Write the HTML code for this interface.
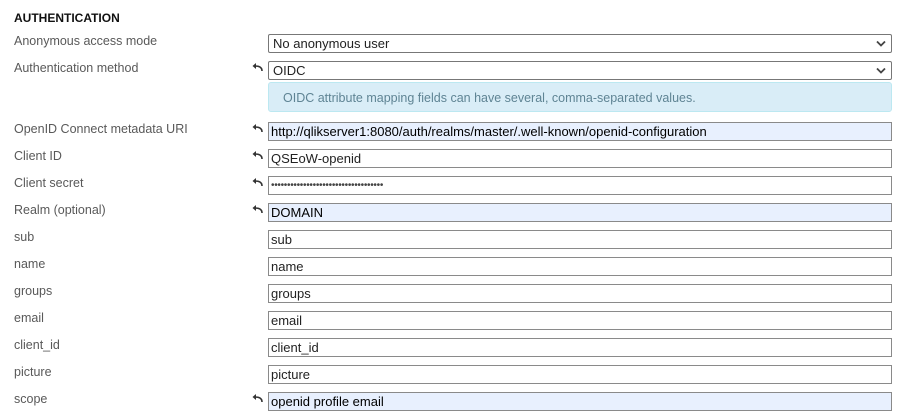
<!DOCTYPE html>
<html><head><meta charset="utf-8"><style>
html,body{margin:0;padding:0;background:#fff;width:900px;height:418px;overflow:hidden;position:relative;font-family:"Liberation Sans",Arial,sans-serif}
.h{position:absolute;left:14px;top:11px;font-size:12px;font-weight:bold;color:#111}
.l{position:absolute;left:14px;font-size:12.5px;color:#595959;line-height:16px}
.f{position:absolute;left:268px;width:620px;height:17px;border:1px solid #8a8a8a;background:#fff;font-size:13px;color:#222;line-height:17px;padding-left:2px;box-sizing:content-box;white-space:nowrap;overflow:hidden}
.f.b{background:#e8f0fe;color:#000}
.s{border-color:#777;border-radius:2px;padding-left:4px;width:618px}
.u{position:absolute;left:252px;width:11px;height:9px}
.ch{position:absolute;right:5px;top:5px}
.info{position:absolute;left:268px;top:82px;height:30px;background:#d9edf7;border:1px solid #bce8f1;border-radius:3px;color:#5f8494;font-size:12.5px;line-height:30px;padding-left:14px;box-sizing:border-box;width:624px}
</style></head><body>
<div class="h">AUTHENTICATION</div>

<div class="l" style="top:33px">Anonymous access mode</div>
<div class="f s" style="top:34px;width:618px">No anonymous user<svg class="ch" width="10" height="7" viewBox="0 0 10 7"><path d="M1 1.5L5 5.5L9 1.5" fill="none" stroke="#444" stroke-width="1.8"/></svg></div>

<div class="l" style="top:60px">Authentication method</div>
<svg class="u" style="top:63px" viewBox="0 0 11 9"><path d="M10 8C10 4 7 3 3 3" fill="none" stroke="#333" stroke-width="1.6"/><path d="M0.5 3L4 0V6Z" fill="#333"/></svg>
<div class="f s" style="top:61px">OIDC<svg class="ch" width="10" height="7" viewBox="0 0 10 7"><path d="M1 1.5L5 5.5L9 1.5" fill="none" stroke="#444" stroke-width="1.8"/></svg></div>
<div class="info">OIDC attribute mapping fields can have several, comma-separated values.</div>

<div class="l" style="top:121px">OpenID Connect metadata URI</div>
<svg class="u" style="top:124px" viewBox="0 0 11 9"><path d="M10 8C10 4 7 3 3 3" fill="none" stroke="#333" stroke-width="1.6"/><path d="M0.5 3L4 0V6Z" fill="#333"/></svg>
<div class="f b" style="top:122px">http://qlikserver1:8080/auth/realms/master/.well-known/openid-configuration</div>

<div class="l" style="top:148px">Client ID</div>
<svg class="u" style="top:151px" viewBox="0 0 11 9"><path d="M10 8C10 4 7 3 3 3" fill="none" stroke="#333" stroke-width="1.6"/><path d="M0.5 3L4 0V6Z" fill="#333"/></svg>
<div class="f" style="top:149px">QSEoW-openid</div>

<div class="l" style="top:175px">Client secret</div>
<svg class="u" style="top:178px" viewBox="0 0 11 9"><path d="M10 8C10 4 7 3 3 3" fill="none" stroke="#333" stroke-width="1.6"/><path d="M0.5 3L4 0V6Z" fill="#333"/></svg>
<div class="f" style="top:176px;font-size:10px;letter-spacing:-0.3px;color:#444">•••••••••••••••••••••••••••••••••••</div>

<div class="l" style="top:202px">Realm (optional)</div>
<svg class="u" style="top:205px" viewBox="0 0 11 9"><path d="M10 8C10 4 7 3 3 3" fill="none" stroke="#333" stroke-width="1.6"/><path d="M0.5 3L4 0V6Z" fill="#333"/></svg>
<div class="f b" style="top:203px">DOMAIN</div>

<div class="l" style="top:229px">sub</div><div class="f" style="top:230px">sub</div>
<div class="l" style="top:256px">name</div><div class="f" style="top:257px">name</div>
<div class="l" style="top:283px">groups</div><div class="f" style="top:284px">groups</div>
<div class="l" style="top:310px">email</div><div class="f" style="top:311px">email</div>
<div class="l" style="top:337px">client_id</div><div class="f" style="top:338px">client_id</div>
<div class="l" style="top:364px">picture</div><div class="f" style="top:365px">picture</div>

<div class="l" style="top:391px">scope</div>
<svg class="u" style="top:394px" viewBox="0 0 11 9"><path d="M10 8C10 4 7 3 3 3" fill="none" stroke="#333" stroke-width="1.6"/><path d="M0.5 3L4 0V6Z" fill="#333"/></svg>
<div class="f b" style="top:392px">openid profile email</div>
</body></html>
